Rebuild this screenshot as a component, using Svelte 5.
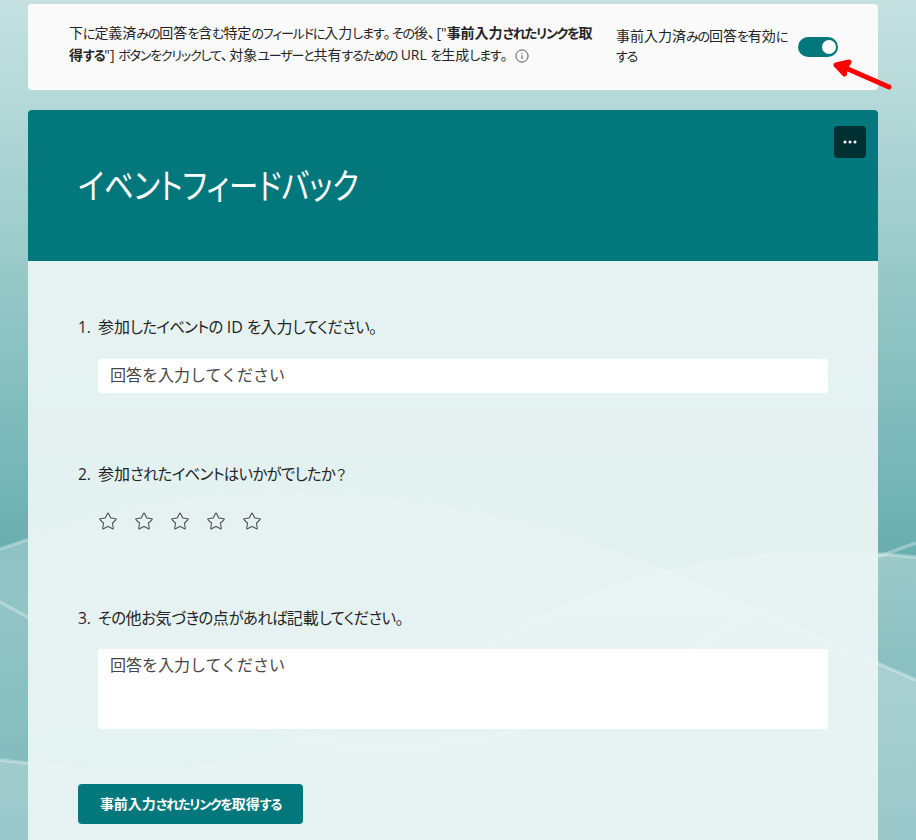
<script lang="ts">
	let prefill = true;
	let eventId = '';
	let comment = '';
	let rating = 0;

	const stars = [1, 2, 3, 4, 5];

	/** Splits a label into kana, punctuation and other runs so kana can be set tighter */
	function runs(text: string) {
		return (text.match(/[\u3003-\u30ff]+|[\u3001\u3002]|[^\u3001-\u30ff]+/g) ?? []).map((t) => ({
			t,
			kana: /^[\u3003-\u30ff]/.test(t),
			punct: /^[\u3001\u3002]/.test(t)
		}));
	}
</script>

{#snippet label(text)}{#each runs(text) as run}<span class:kana={run.kana} class:punct={run.punct}>{run.t}</span>{/each}{/snippet}

<div class="page">
	<svg class="backdrop" viewBox="0 0 916 840" aria-hidden="true">
		<defs>
			<linearGradient id="sky" x1="0" y1="0" x2="0" y2="1">
				<stop offset="0" stop-color="#c5e2e1" />
				<stop offset="0.65" stop-color="#6aafb0" />
				<stop offset="1" stop-color="#5ba6a9" />
			</linearGradient>
			<linearGradient id="hill" gradientUnits="userSpaceOnUse" x1="0" y1="495" x2="0" y2="840">
				<stop offset="0" stop-color="#fff" stop-opacity="0.2" />
				<stop offset="0.3" stop-color="#fff" stop-opacity="0.28" />
				<stop offset="1" stop-color="#fff" stop-opacity="0.21" />
			</linearGradient>
			<linearGradient id="swell" gradientUnits="userSpaceOnUse" x1="0" y1="550" x2="0" y2="840">
				<stop offset="0" stop-color="#fff" stop-opacity="0.34" />
				<stop offset="0.38" stop-color="#fff" stop-opacity="0.25" />
				<stop offset="1" stop-color="#fff" stop-opacity="0.22" />
			</linearGradient>
		</defs>
		<rect width="916" height="840" fill="url(#sky)" />
		<path d="M0 549C90 518 180 494 273 494C440 494 560 528 666 572C760 610 840 647 916 680V840H0Z" fill="url(#hill)" />
		<path d="M0 760C60 767 100 771 146 771C280 771 370 706 479 649C600 580 730 538 916 557V840H0Z" fill="url(#swell)" />
		<g class="ridges">
			<path d="M0 549C90 518 180 494 273 494C440 494 560 528 666 572C760 610 840 647 916 680" />
			<path d="M0 760C60 767 100 771 146 771C280 771 370 706 479 649C600 580 730 538 916 557" />
			<path d="M0 602C110 661 240 747 383 747C540 747 640 680 694 648C760 608 830 572 916 543" />
		</g>
	</svg>

	<main>
		<section class="prefill-bar">
			<p class="hint">
				<span class="row">{@render label('下に定義済みの回答を含む特定のフィールドに入力します。その後、["')}<b>{@render label('事前入力されたリンクを取')}</b></span>
				<span class="row"><b>{@render label('得する')}</b>{@render label('"] ボタンをクリックして、対象ユーザーと共有するための URL を生成します。')}<svg class="info" viewBox="0 0 14 14" aria-hidden="true">
						<circle cx="7" cy="7" r="6.1" />
						<path d="M7 6.2V10M7 4V5" />
					</svg></span>
			</p>
			<span class="toggle-label">{@render label('事前入力済みの回答を有効に')}<br />{@render label('する')}</span>
			<button
				class="toggle"
				class:on={prefill}
				role="switch"
				aria-checked={prefill}
				aria-label="事前入力済みの回答を有効にする"
				on:click={() => (prefill = !prefill)}
			>
				<span class="knob"></span>
			</button>
			<svg class="arrow" viewBox="0 0 62 36" aria-hidden="true">
				<path d="M58 30L10 9" />
				<path class="head" d="M18 5L5 8L13.500 17L14 11Z" />
			</svg>
		</section>

		<section class="form">
			<header>
				<h1>イベントフィードバック</h1>
				<button class="more" aria-label="その他">
					<svg viewBox="0 0 16 16"><circle cx="3" cy="8" r="1.5" /><circle cx="8" cy="8" r="1.5" /><circle cx="13" cy="8" r="1.5" /></svg>
				</button>
			</header>

			<div class="questions">
				<div class="question q1">
					<h2><span class="num">1.</span><span class="title">{@render label('参加したイベントの ID を入力してください。')}</span></h2>
					<input bind:value={eventId} placeholder="回答を入力してください" />
				</div>

				<div class="question q2">
					<h2><span class="num">2.</span><span class="title">{@render label('参加されたイベントはいかがでしたか')}<span class="mark">？</span></span></h2>
					<div class="stars">
						{#each stars as n}
							<button class:filled={n <= rating} aria-label={`${n}`} on:click={() => (rating = n)}>
								<svg viewBox="0 0 20 20">
									<path d="M9.1 2.9a1 1 0 0 1 1.8 0l1.93 3.91 4.31.63a1 1 0 0 1 .56 1.7l-3.12 3.05.73 4.3a1 1 0 0 1-1.45 1.05L10 15.51l-3.86 2.03a1 1 0 0 1-1.45-1.05l.74-4.3L2.3 9.14a1 1 0 0 1 .56-1.7l4.31-.63L9.1 2.9Zm.9.44L8.07 7.25a1 1 0 0 1-.75.55L3 8.43l3.12 3.04a1 1 0 0 1 .3.89l-.75 4.3 3.87-2.03a1 1 0 0 1 .93 0l3.86 2.03-.74-4.3a1 1 0 0 1 .29-.89L17 8.43l-4.32-.63a1 1 0 0 1-.75-.55L10 3.35Z" />
								</svg>
							</button>
						{/each}
					</div>
				</div>

				<div class="question q3">
					<h2><span class="num">3.</span><span class="title">{@render label('その他お気づきの点があれば記載してください。')}</span></h2>
					<textarea bind:value={comment} placeholder="回答を入力してください"></textarea>
				</div>

				<button class="submit">{@render label('事前入力されたリンクを取得する')}</button>
			</div>
		</section>
	</main>
</div>

<style>
	:global(body) {
		margin: 0;
		overflow: hidden;
	}

	.page {
		position: relative;
		box-sizing: border-box;
		width: 916px;
		height: 840px;
		padding: 4px 38px 0 28px;
		overflow: hidden;
		color: #242424;
		font-family: 'Open Sans', 'Noto Sans CJK JP', sans-serif;
		font-feature-settings: 'palt';
	}

	.backdrop {
		position: absolute;
		inset: 0;
		width: 916px;
		height: 840px;
	}

	.ridges path {
		fill: none;
		stroke: rgba(255, 255, 255, 0.3);
		stroke-width: 3.5;
	}

	button {
		padding: 0;
		border: 0;
		font: inherit;
	}

	/* kana run narrower than the kanji around them */
	.kana {
		font-size: 0.93em;
		letter-spacing: -0.09em;
	}

	.punct {
		margin-right: 1.5px;
	}

	main {
		position: relative;
		display: flex;
		flex-direction: column;
		gap: 20px;
		height: 836px;
	}

	/* ── Prefill bar ── */
	.prefill-bar {
		position: relative;
		display: flex;
		box-sizing: border-box;
		height: 86px;
		padding: 18px 40px 0 41px;
		border-radius: 4px;
		background: #fafafa;
		font-size: 14px;
	}

	.hint {
		width: 547px;
		margin: 0;
		line-height: 22px;
	}

	.row {
		display: block;
		height: 22px;
		white-space: pre;
	}

	.row b {
		font-weight: 700;
	}

	.info {
		width: 14px;
		height: 14px;
		margin-left: 6px;
		vertical-align: -3px;
		fill: none;
		stroke: #555;
	}

	.toggle-label {
		width: 182px;
		padding-top: 4px;
		line-height: 20px;
		white-space: nowrap;
	}

	.toggle {
		display: flex;
		justify-content: flex-start;
		align-items: center;
		box-sizing: border-box;
		width: 40px;
		height: 20px;
		margin-top: 15px;
		padding: 0 2px;
		border-radius: 10px;
		background: #8a8886;
	}

	.toggle.on {
		justify-content: flex-end;
		background: #03787c;
	}

	.knob {
		width: 14px;
		height: 14px;
		border-radius: 50%;
		background: #fff;
	}

	.arrow {
		position: absolute;
		top: 53px;
		left: 803px;
		width: 62px;
		height: 36px;
		fill: none;
		stroke: #fe0000;
		stroke-width: 5;
		stroke-linecap: round;
		stroke-linejoin: round;
	}

	.arrow .head {
		fill: #fe0000;
	}

	/* ── Form card ── */
	.form {
		flex: 1;
		border-radius: 4px 4px 0 0;
		overflow: hidden;
	}

	header {
		display: flex;
		justify-content: space-between;
		box-sizing: border-box;
		height: 151px;
		padding: 16px 12px 0 50px;
		background: #03787c;
	}

	h1 {
		margin: 34px 0 0;
		color: #fff;
		font-size: 35px;
		font-weight: 400;
		line-height: 52px;
		white-space: nowrap;
		transform: scaleX(0.84);
		transform-origin: left;
	}

	.more {
		display: flex;
		align-items: center;
		justify-content: center;
		width: 32px;
		height: 32px;
		border-radius: 4px;
		background: #023032;
	}

	.more svg {
		width: 16px;
		height: 16px;
		fill: #fff;
	}

	.questions {
		box-sizing: border-box;
		height: 600px;
		padding: 54px 50px 0;
		background: rgba(236, 245, 244, 0.93);
	}

	h2 {
		display: flex;
		height: 24px;
		margin: 0;
		font-size: 16px;
		font-weight: 400;
		line-height: 24px;
		white-space: nowrap;
	}

	h2 .kana {
		font-size: 0.96em;
		letter-spacing: -0.042em;
	}

	.mark {
		display: inline-block;
		margin-left: 1px;
		font-size: 14px;
	}

	.num {
		width: 20px;
		font-size: 15.5px;
	}

	.q1 {
		height: 147px;
	}

	.q2 {
		height: 144px;
	}

	.q3 {
		height: 178px;
	}

	input,
	textarea {
		display: block;
		box-sizing: border-box;
		width: 730px;
		margin: 20px 0 0 20px;
		padding: 0 12px 4px;
		border: 0;
		border-radius: 3px;
		background: #fff;
		font-family: 'Noto Sans CJK JP', sans-serif;
		font-feature-settings: normal;
		font-size: 16px;
		line-height: 30px;
		resize: none;
	}

	input {
		height: 34px;
		padding-bottom: 5px;
	}

	textarea {
		height: 80px;
		margin-top: 19px;
	}

	input::placeholder,
	textarea::placeholder {
		color: #484644;
		opacity: 1;
	}

	.stars {
		display: flex;
		gap: 14px;
		margin: 24px 0 0 19px;
	}

	.stars button {
		width: 22px;
		height: 22px;
		background: none;
	}

	.stars svg {
		display: block;
		width: 22px;
		height: 22px;
		fill: #505050;
	}

	.stars .filled svg {
		fill: #03787c;
	}

	.submit {
		display: block;
		width: 225px;
		height: 40px;
		padding-bottom: 2px;
		border-radius: 4px;
		background: #03787c;
		color: #fff;
		font-size: 14px;
		font-weight: 700;
		white-space: nowrap;
	}
</style>
